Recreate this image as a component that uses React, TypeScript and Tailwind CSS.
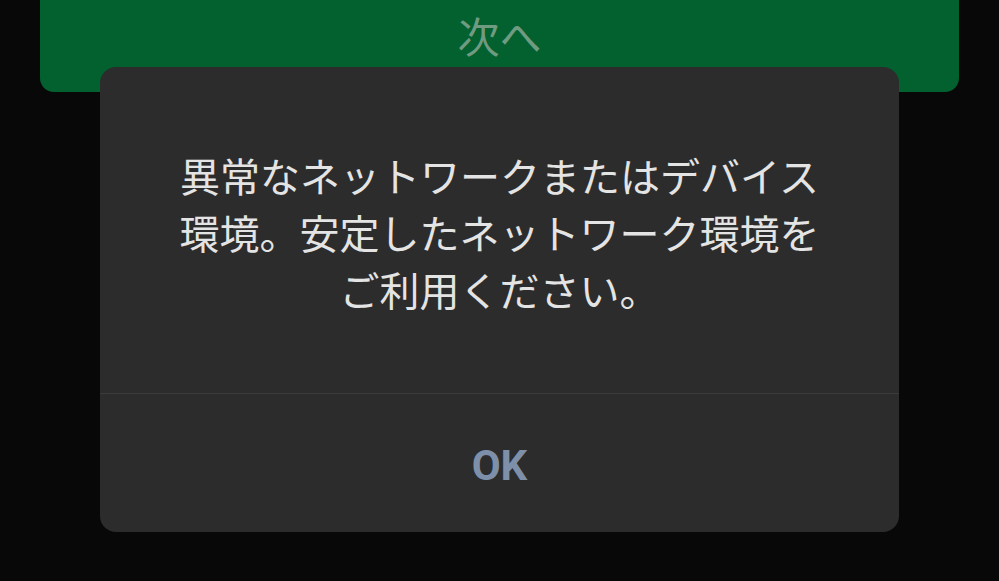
export default function App() {
  return (
    <div
      className="relative h-[581px] w-[999px] overflow-hidden bg-[#080808]"
      style={{ fontFamily: '"Noto Sans CJK JP", "Noto Sans", sans-serif' }}
    >
      {/* Next button behind the modal */}
      <div className="px-[40px]">
        <button className="-mt-[24px] flex h-[116px] w-full items-center justify-center rounded-b-[14px] bg-[#03602f] text-[42px] text-[#6f9b81]">
          次へ
        </button>
      </div>

      {/* Alert dialog */}
      <div className="absolute left-[100px] top-[67px] flex h-[465px] w-[799px] flex-col overflow-hidden rounded-[16px] bg-[#2c2c2c]">
        <div className="h-[326px] px-[70px] pt-[80px] text-center text-[40px] leading-[57px] text-[#e4e4e4]">
          異常なネットワークまたはデバイス環境。安定したネットワーク環境をご利用ください。
        </div>
        <div className="h-px bg-[#3b3b3b]" />
        <button
          className="flex flex-1 items-center justify-center pt-[4px] text-[42px] font-bold text-[#7e90a9]"
          style={{ fontFamily: 'Roboto, "Noto Sans", sans-serif' }}
        >
          OK
        </button>
      </div>
    </div>
  );
}
